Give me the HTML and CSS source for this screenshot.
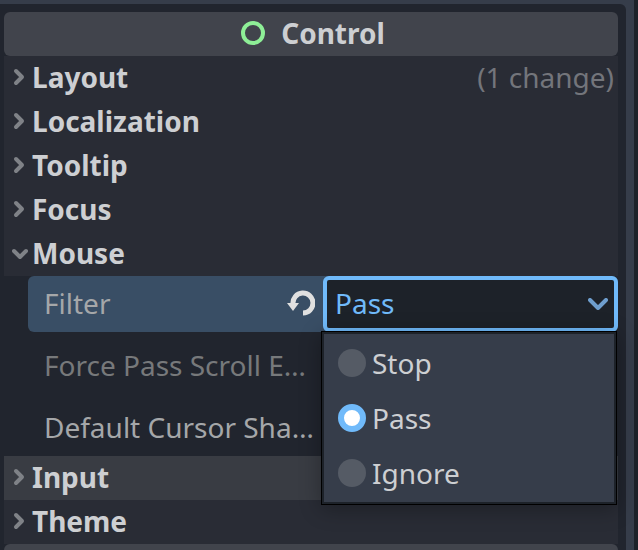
FILE: index.html
```html
<!DOCTYPE html>
<html lang="en">
<head>
    <meta charset="UTF-8">
    <meta name="viewport" content="width=device-width, initial-scale=1.0">
    <title>Inspector</title>
    <link rel="stylesheet" href="styles.css">
</head>
<body>
    <div class="dock">
        <div class="inspector">
            <div class="category">
                <svg class="node-icon" viewBox="0 0 24 24"><circle cx="12" cy="12" r="10"/></svg>
                <span>Control</span>
            </div>

            <button class="section">
                <svg class="arrow" viewBox="0 0 16 20"><path d="M4 4l6 6-6 6"/></svg>
                <span>Layout</span>
                <span class="changes">(1 change)</span>
            </button>
            <button class="section">
                <svg class="arrow" viewBox="0 0 16 20"><path d="M4 4l6 6-6 6"/></svg>
                <span>Localization</span>
            </button>
            <button class="section">
                <svg class="arrow" viewBox="0 0 16 20"><path d="M4 4l6 6-6 6"/></svg>
                <span>Tooltip</span>
            </button>
            <button class="section">
                <svg class="arrow" viewBox="0 0 16 20"><path d="M4 4l6 6-6 6"/></svg>
                <span>Focus</span>
            </button>
            <button class="section">
                <svg class="arrow" viewBox="0 0 16 20"><path d="M2 8l6 6 6-6"/></svg>
                <span>Mouse</span>
            </button>

            <div class="properties">
                <div class="property selected">
                    <div class="property-name">
                        <label for="filter">Filter</label>
                        <button class="revert" aria-label="Revert">
                            <svg viewBox="0 0 28 26">
                                <path class="revert-arc" d="M6 14a10 10 0 1 1 10 9"/>
                                <path class="revert-head" d="M0 13h12l-6 8z"/>
                            </svg>
                        </button>
                    </div>
                    <div class="dropdown">
                        <select id="filter">
                            <option>Stop</option>
                            <option selected>Pass</option>
                            <option>Ignore</option>
                        </select>
                        <svg class="dropdown-arrow" viewBox="0 0 20 12"><path d="M2 2l8 8 8-8"/></svg>
                        <div class="menu">
                            <label class="menu-item"><input type="radio" name="mode">Stop</label>
                            <label class="menu-item"><input type="radio" name="mode" checked>Pass</label>
                            <label class="menu-item"><input type="radio" name="mode">Ignore</label>
                        </div>
                    </div>
                </div>
                <div class="property disabled">
                    <div class="property-name"><span class="name">Force Pass Scroll Events</span></div>
                </div>
                <div class="property">
                    <div class="property-name"><span class="name">Default Cursor Shape</span></div>
                </div>
            </div>

            <button class="section hover">
                <svg class="arrow" viewBox="0 0 16 20"><path d="M4 4l6 6-6 6"/></svg>
                <span>Input</span>
            </button>
            <button class="section">
                <svg class="arrow" viewBox="0 0 16 20"><path d="M4 4l6 6-6 6"/></svg>
                <span>Theme</span>
            </button>
            <div class="category"></div>
        </div>
    </div>
</body>
</html>
```

FILE: styles.css
```css
* {
    box-sizing: border-box;
}

body {
    margin: 0;
    height: 100vh;
    overflow: hidden;
    background-color: #1d2229;
    color: #cdcfd2;
    font-family: "Noto Sans", sans-serif;
    font-size: 28px;
    line-height: 42px;
}

button, select {
    font: inherit;
    color: inherit;
    border: none;
    margin: 0;
    padding: 0;
    background: none;
}

svg {
    display: block;
    fill: none;
    stroke-linecap: round;
    stroke-linejoin: round;
}

.dock {
    margin-right: 4px;
    padding: 4px 8px 0 0;
    background-color: #363d4a;
}

.inspector {
    min-height: 100vh;
    padding: 8px 8px 0 4px;
    background-color: #21252e;
    border-top-right-radius: 6px;
}

.category {
    display: flex;
    align-items: center;
    justify-content: center;
    gap: 16px;
    height: 44px;
    padding: 0 0 2px 4px;
    border-radius: 6px;
    background-color: #41444c;
    font-weight: bold;
}

.node-icon {
    width: 24px;
    height: 24px;
    stroke: #8eef97;
    stroke-width: 4;
}

.section {
    display: flex;
    align-items: center;
    width: 100%;
    height: 44px;
    padding: 0 4px 2px 8px;
    background-color: #292c35;
    font-weight: bold;
    text-align: left;
}

.section.hover {
    background-color: #393c43;
}

.arrow {
    width: 16px;
    height: 20px;
    margin-right: 4px;
    stroke: #7f8287;
    stroke-width: 4;
}

.changes {
    margin-left: auto;
    color: #73757b;
    font-weight: normal;
}

.properties {
    display: grid;
    gap: 6px;
    padding-left: 24px;
}

.property {
    display: grid;
    grid-template-columns: 1fr 1fr;
    height: 56px;
    border-radius: 6px;
    color: #a5a7a9;
}

.property.selected {
    background-color: #394e65;
}

.property.disabled {
    color: #77797b;
}

.property-name {
    display: flex;
    align-items: center;
    justify-content: space-between;
    min-width: 0;
    padding: 0 8px 2px 16px;
}

.name {
    overflow: hidden;
    text-overflow: ellipsis;
    white-space: nowrap;
}

.revert svg {
    width: 28px;
    height: 26px;
}

.revert-arc {
    stroke: #e0e0e0;
    stroke-width: 5;
    stroke-linecap: butt;
}

.revert-head {
    fill: #e0e0e0;
}

.dropdown {
    position: relative;
}

.dropdown select {
    appearance: none;
    display: block;
    width: 100%;
    height: 56px;
    padding: 0 8px 2px;
    border: 4px solid #70bafa;
    border-radius: 6px;
    background-color: #1d2229;
    color: #70bafa;
    outline: none;
}

.dropdown-arrow {
    position: absolute;
    top: 22px;
    right: 10px;
    width: 20px;
    height: 12px;
    stroke: #6f9fce;
    stroke-width: 4;
    pointer-events: none;
}

.menu {
    position: absolute;
    top: 55px;
    left: -2px;
    right: 1px;
    z-index: 1;
    padding: 1px 14px 2px;
    border: 3px solid #1d2229;
    outline: 1px solid #000;
    outline-offset: -1px;
    background-color: #363d4a;
    box-shadow: 0 4px 20px rgba(0, 0, 0, 0.3);
    color: #cdcfd2;
}

.menu-item {
    display: flex;
    align-items: center;
    gap: 6px;
    height: 55px;
}

.menu-item input {
    appearance: none;
    width: 28px;
    height: 28px;
    margin: 0;
    border-radius: 50%;
    background-color: #555b65;
}

.menu-item input:checked {
    border: 6px solid #70bafa;
    background-color: #fff;
}
```
